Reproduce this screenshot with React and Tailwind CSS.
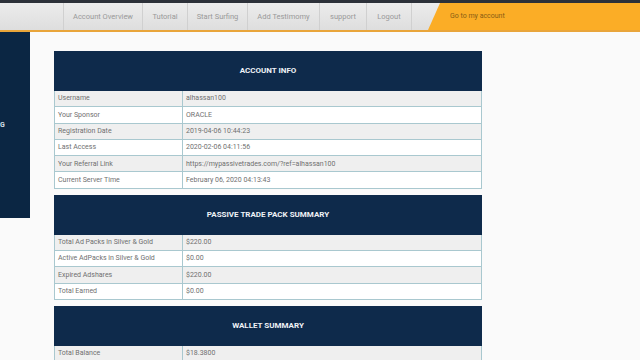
import React from 'react';

const navItems = [
  ['Account Overview', 'w-[79px]'],
  ['Tutorial', 'w-[45px]'],
  ['Start Surfing', 'w-[60px]'],
  ['Add Testimomy', 'w-[72px]'],
  ['support', 'w-[47px]'],
  ['Logout', 'w-[45px]'],
];

const sections = [
  {
    title: 'ACCOUNT INFO',
    rows: [
      ['Username', 'alhassan100'],
      ['Your Sponsor', 'ORACLE'],
      ['Registration Date', '2019-04-06 10:44:23'],
      ['Last Access', '2020-02-06 04:11:56'],
      ['Your Referral Link', 'https://mypassivetrades.com/?ref=alhassan100'],
      ['Current Server Time', 'February 06, 2020 04:13:43'],
    ],
  },
  {
    title: 'PASSIVE TRADE PACK SUMMARY',
    rows: [
      ['Total Ad Packs in Silver & Gold', '$220.00'],
      ['Active AdPacks in Silver & Gold', '$0.00'],
      ['Expired Adshares', '$220.00'],
      ['Total Earned', '$0.00'],
    ],
  },
  {
    title: 'WALLET SUMMARY',
    rows: [['Total Balance', '$18.3800']],
  },
];

const InfoTable = ({ title, rows }) => (
  <div className="flex flex-col">
    <div className="h-[40px] bg-[#0e2a4b] flex items-center justify-center text-[8px] font-bold text-[#eef2f7]">
      {title}
    </div>
    {rows.map(([label, value], i) => (
      <div
        key={label}
        className={`flex h-[16.3px] border-x border-b border-[#a9c8cf] text-[7px] text-[#707070] ${i % 2 === 0 ? 'bg-[#efefef]' : 'bg-white'}`}
      >
        <div className="w-[128px] shrink-0 flex items-center pl-[3px] border-r border-[#a9c8cf]">{label}</div>
        <div className="flex-1 flex items-center pl-[3px]">{value}</div>
      </div>
    ))}
  </div>
);

export default function App() {
  return (
    <div className="w-[640px] h-[360px] overflow-hidden bg-[#fafafa] flex flex-col" style={{ fontFamily: 'Roboto, "Liberation Sans", sans-serif' }}>
      <div className="h-[3px] bg-[#2c3139] shrink-0" />
      <div className="h-[29px] shrink-0 flex border-b-[2px] border-[#e9a53a]">
        <div className="w-[428px] flex bg-gradient-to-b from-[#ececec] to-[#dedede]">
          <div className="w-[64px] border-r border-[#d0d0d0]" />
          {navItems.map(([item, w]) => (
            <div key={item} className={`${w} shrink-0 flex items-center justify-center whitespace-nowrap text-[7.5px] text-[#999999] border-r border-[#d0d0d0]`}>
              {item}
            </div>
          ))}
        </div>
        <div className="flex-1 flex items-center bg-[#fbad26] relative">
          <div className="absolute left-0 top-0 h-full w-[12px] bg-gradient-to-b from-[#ececec] to-[#dedede] [clip-path:polygon(0_0,100%_0,0_100%)]" />
          <span className="pl-[22px] text-[7px] text-[#8a5d14]">Go to my account</span>
        </div>
      </div>
      <div className="flex flex-1">
        <div className="w-[30px] h-[186px] shrink-0 bg-[#0b2643] overflow-hidden flex flex-col pt-[88px]">
          <span className="text-[7px] font-bold text-[#d8e0ea]">G</span>
        </div>
        <div className="pl-[24px] pt-[19px] w-[452px] flex flex-col gap-[6px]">
          {sections.map((s) => (
            <InfoTable key={s.title} title={s.title} rows={s.rows} />
          ))}
        </div>
      </div>
    </div>
  );
}
